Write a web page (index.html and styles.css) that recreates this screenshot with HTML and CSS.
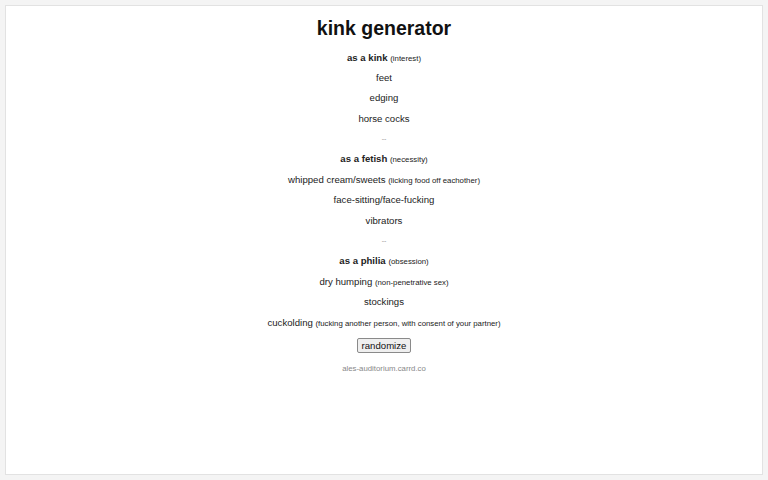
FILE: index.html
```html
<!DOCTYPE html>
<html lang="en">
<head>
    <meta charset="UTF-8">
    <meta name="viewport" content="width=device-width, initial-scale=1.0">
    <title>kink generator</title>
    <link rel="stylesheet" href="styles.css">
</head>
<body>
    <div class="card">
        <h1>kink generator</h1>

        <p class="head">as a kink <small>(interest)</small></p>
        <p class="kink">feet</p>
        <p class="kink">edging</p>
        <p class="kink">horse cocks</p>
        <p class="sep">--</p>

        <p class="head">as a fetish <small>(necessity)</small></p>
        <p class="fetish">whipped cream/sweets <small>(licking food off eachother)</small></p>
        <p class="fetish">face-sitting/face-fucking</p>
        <p class="fetish">vibrators</p>
        <p class="sep">--</p>

        <p class="head">as a philia <small>(obsession)</small></p>
        <p class="philia">dry humping <small>(non-penetrative sex)</small></p>
        <p class="philia">stockings</p>
        <p class="philia">cuckolding <small>(fucking another person, with consent of your partner)</small></p>

        <div class="actions">
            <button>randomize</button>
        </div>
        <p class="credit">ales-auditorium.carrd.co</p>
    </div>
</body>
</html>
```

FILE: styles.css
```css
*{
    box-sizing: border-box;
}
body{
    margin: 0;
    padding: 5px;
    background-color: #f4f4f4;
    font-family: "Liberation Sans", Arial, sans-serif;
    color: #222;
}
.card{
    height: 470px;
    background: #fff;
    border: 1px solid #e2e2e2;
    padding-top: 11px;
    text-align: center;
}
h1{
    font-size: 19.5px;
    line-height: 22px;
    font-weight: bold;
    color: #111;
    margin: 0 0 12.5px;
}
p{
    font-size: 9.6px;
    line-height: 11px;
    height: 11px;
    margin: 9.4px 0;
}
small{
    font-size: 7.8px;
    line-height: 1;
    font-weight: normal;
}
.head{
    font-weight: bold;
}
.sep{
    font-size: 7px;
    color: #999;
}
.actions{
    display: flex;
    justify-content: center;
    margin: 10.2px 0 10.8px;
}
.actions button{
    font-family: "Liberation Sans", Arial, sans-serif;
    font-size: 9.6px;
    line-height: 11px;
    color: #111;
    background: #efefef;
    border: 1px solid #8a8a8a;
    border-radius: 2px;
    padding: 1px 4px;
}
.credit{
    font-size: 7.8px;
    line-height: 9px;
    height: 9px;
    color: #888;
}
```
